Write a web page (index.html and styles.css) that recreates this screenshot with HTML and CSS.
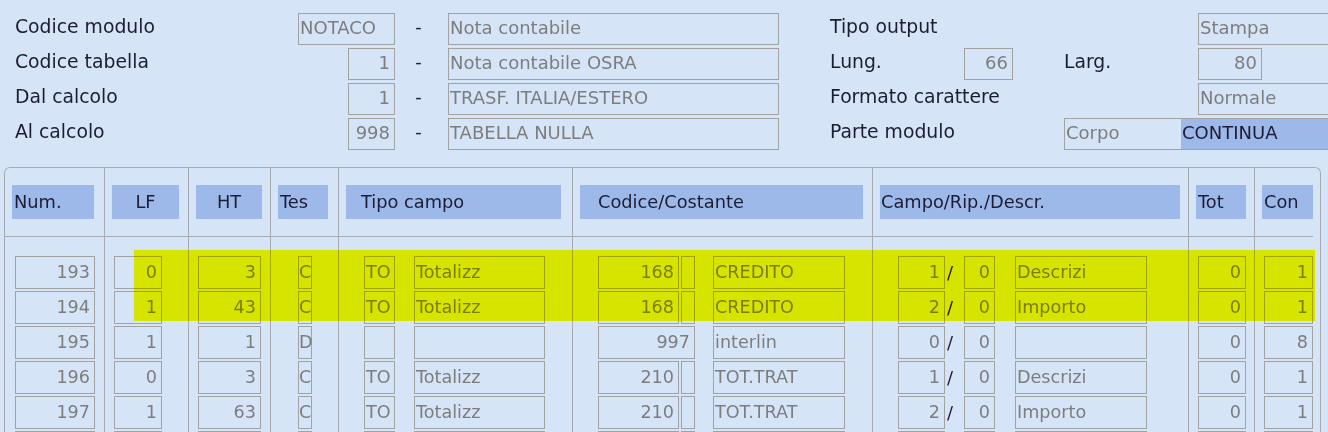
FILE: index.html
```html
<!DOCTYPE html>
<html lang="it">
<head>
<meta charset="utf-8">
<title>Nota contabile</title>
<link rel="stylesheet" href="styles.css">
</head>
<body>
<div class="page">
  <div class="top">
    <div class="lbl c1">Codice modulo</div>
    <div class="fld c2 w97">NOTACO</div>
    <div class="dash c3">-</div>
    <div class="fld c4">Nota contabile</div>
    <div class="lbl c6">Tipo output</div>
    <div class="fld c11 wide">Stampa</div>

    <div class="lbl c1">Codice tabella</div>
    <div class="fld c2 w47 num">1</div>
    <div class="dash c3">-</div>
    <div class="fld c4">Nota contabile OSRA</div>
    <div class="lbl c6">Lung.</div>
    <div class="fld c7 num">66</div>
    <div class="lbl c9">Larg.</div>
    <div class="fld c11 w64 num">80</div>

    <div class="lbl c1">Dal calcolo</div>
    <div class="fld c2 w47 num">1</div>
    <div class="dash c3">-</div>
    <div class="fld c4">TRASF. ITALIA/ESTERO</div>
    <div class="lbl c6 span3">Formato carattere</div>
    <div class="fld c11 wide">Normale</div>

    <div class="lbl c1">Al calcolo</div>
    <div class="fld c2 w47 num">998</div>
    <div class="dash c3">-</div>
    <div class="fld c4">TABELLA NULLA</div>
    <div class="lbl c6">Parte modulo</div>
    <div class="combo c9to11"><span class="combo-a">Corpo</span><span class="combo-b">CONTINUA</span></div>
  </div>

  <div class="table">
    <div class="trow head">
      <div class="cell"><div class="th w82">Num.</div></div>
      <div class="cell"><div class="th w67 center">LF</div></div>
      <div class="cell"><div class="th w66 center">HT</div></div>
      <div class="cell"><div class="th w50">Tes</div></div>
      <div class="cell"><div class="th w215 p15">Tipo campo</div></div>
      <div class="cell"><div class="th w283 p18">Codice/Costante</div></div>
      <div class="cell"><div class="th w300 p1">Campo/Rip./Descr.</div></div>
      <div class="cell"><div class="th w50">Tot</div></div>
      <div class="cell"><div class="th w51">Con</div></div>
    </div>
    <div class="trow spacer">
      <div class="cell"></div><div class="cell"></div><div class="cell"></div><div class="cell"></div><div class="cell"></div><div class="cell"></div><div class="cell"></div><div class="cell"></div><div class="cell"></div>
    </div>

    <div class="trow data">
      <div class="cell"><div class="bx b-num num">193</div></div>
      <div class="cell"><div class="bx b-lf num">0</div></div>
      <div class="cell"><div class="bx b-ht num">3</div></div>
      <div class="cell"><div class="bx b-tes">C</div></div>
      <div class="cell"><div class="bx b-to">TO</div><div class="bx b-txt g19">Totalizz</div></div>
      <div class="cell"><div class="bx b-cod num">168</div><div class="bx b-sm"></div><div class="bx b-txt g18">CREDITO</div></div>
      <div class="cell"><div class="bx b-c1 num">1</div><div class="slash">/</div><div class="bx b-c2 num">0</div><div class="bx b-txt g20">Descrizi</div></div>
      <div class="cell"><div class="bx b-tot num">0</div></div>
      <div class="cell"><div class="bx b-con num">1</div></div>
    </div>
    <div class="trow data">
      <div class="cell"><div class="bx b-num num">194</div></div>
      <div class="cell"><div class="bx b-lf num">1</div></div>
      <div class="cell"><div class="bx b-ht num">43</div></div>
      <div class="cell"><div class="bx b-tes">C</div></div>
      <div class="cell"><div class="bx b-to">TO</div><div class="bx b-txt g19">Totalizz</div></div>
      <div class="cell"><div class="bx b-cod num">168</div><div class="bx b-sm"></div><div class="bx b-txt g18">CREDITO</div></div>
      <div class="cell"><div class="bx b-c1 num">2</div><div class="slash">/</div><div class="bx b-c2 num">0</div><div class="bx b-txt g20">Importo</div></div>
      <div class="cell"><div class="bx b-tot num">0</div></div>
      <div class="cell"><div class="bx b-con num">1</div></div>
    </div>
    <div class="trow data">
      <div class="cell"><div class="bx b-num num">195</div></div>
      <div class="cell"><div class="bx b-lf num">1</div></div>
      <div class="cell"><div class="bx b-ht num">1</div></div>
      <div class="cell"><div class="bx b-tes">D</div></div>
      <div class="cell"><div class="bx b-to"></div><div class="bx b-txt g19"></div></div>
      <div class="cell"><div class="bx b-codw num">997</div><div class="bx b-txt g18">interlin</div></div>
      <div class="cell"><div class="bx b-c1 num">0</div><div class="slash">/</div><div class="bx b-c2 num">0</div><div class="bx b-txt g20"></div></div>
      <div class="cell"><div class="bx b-tot num">0</div></div>
      <div class="cell"><div class="bx b-con num">8</div></div>
    </div>
    <div class="trow data">
      <div class="cell"><div class="bx b-num num">196</div></div>
      <div class="cell"><div class="bx b-lf num">0</div></div>
      <div class="cell"><div class="bx b-ht num">3</div></div>
      <div class="cell"><div class="bx b-tes">C</div></div>
      <div class="cell"><div class="bx b-to">TO</div><div class="bx b-txt g19">Totalizz</div></div>
      <div class="cell"><div class="bx b-cod num">210</div><div class="bx b-sm"></div><div class="bx b-txt g18">TOT.TRAT</div></div>
      <div class="cell"><div class="bx b-c1 num">1</div><div class="slash">/</div><div class="bx b-c2 num">0</div><div class="bx b-txt g20">Descrizi</div></div>
      <div class="cell"><div class="bx b-tot num">0</div></div>
      <div class="cell"><div class="bx b-con num">1</div></div>
    </div>
    <div class="trow data">
      <div class="cell"><div class="bx b-num num">197</div></div>
      <div class="cell"><div class="bx b-lf num">1</div></div>
      <div class="cell"><div class="bx b-ht num">63</div></div>
      <div class="cell"><div class="bx b-tes">C</div></div>
      <div class="cell"><div class="bx b-to">TO</div><div class="bx b-txt g19">Totalizz</div></div>
      <div class="cell"><div class="bx b-cod num">210</div><div class="bx b-sm"></div><div class="bx b-txt g18">TOT.TRAT</div></div>
      <div class="cell"><div class="bx b-c1 num">2</div><div class="slash">/</div><div class="bx b-c2 num">0</div><div class="bx b-txt g20">Importo</div></div>
      <div class="cell"><div class="bx b-tot num">0</div></div>
      <div class="cell"><div class="bx b-con num">1</div></div>
    </div>
    <div class="trow data">
      <div class="cell"><div class="bx b-num num"></div></div>
      <div class="cell"><div class="bx b-lf num"></div></div>
      <div class="cell"><div class="bx b-ht num"></div></div>
      <div class="cell"><div class="bx b-tes"></div></div>
      <div class="cell"><div class="bx b-to"></div><div class="bx b-txt g19"></div></div>
      <div class="cell"><div class="bx b-cod num"></div><div class="bx b-sm"></div><div class="bx b-txt g18"></div></div>
      <div class="cell"><div class="bx b-c1 num"></div><div class="slash"></div><div class="bx b-c2 num"></div><div class="bx b-txt g20"></div></div>
      <div class="cell"><div class="bx b-tot num"></div></div>
      <div class="cell"><div class="bx b-con num"></div></div>
    </div>

    <div class="highlight"></div>
  </div>
</div>
</body>
</html>
```

FILE: styles.css
```css
html, body {
  margin: 0;
  padding: 0;
  background: #d6e4f7;
  overflow: hidden;
}
.page {
  width: 1328px;
  height: 432px;
  overflow: hidden;
  font-family: "DejaVu Sans", Verdana, sans-serif;
  color: #1c1c34;
}

/* ---------- top form ---------- */
.top {
  display: grid;
  grid-template-columns: 283px 97px 53px 331px 51px 134px 49px 51px 116px 18px 140px;
  grid-auto-rows: 32px;
  row-gap: 3px;
  padding: 13px 0 0 15px;
}
.lbl {
  font-size: 18.8px;
  line-height: 28px;
  white-space: nowrap;
}
.c1 { grid-column: 1; }
.c2 { grid-column: 2; }
.c3 { grid-column: 3; }
.c4 { grid-column: 4; }
.c6 { grid-column: 6; }
.c7 { grid-column: 7; }
.c9 { grid-column: 9; }
.c11 { grid-column: 11; }
.span3 { grid-column: 6 / span 3; }
.c9to11 { grid-column: 9 / span 3; }

.fld {
  box-sizing: border-box;
  border: 1px solid #a2a2a2;
  color: #7d7d7d;
  font-size: 18px;
  line-height: 28px;
  padding: 0 1px;
  white-space: nowrap;
  overflow: hidden;
}
.num { text-align: right; padding-right: 4px; }
.w97 { width: 97px; }
.w47 { width: 47px; justify-self: end; }
.w64 { width: 64px; }
.wide { width: 150px; }
.dash {
  text-align: center;
  font-size: 18px;
  line-height: 28px;
  padding-right: 6px;
}
.combo {
  display: flex;
  box-sizing: border-box;
  border: 1px solid #a2a2a2;
  width: 280px;
  font-size: 18px;
  line-height: 28px;
}
.combo-a {
  width: 115px;
  color: #7d7d7d;
  padding-left: 1px;
}
.combo-b {
  flex: 1;
  background: #9db9ea;
  color: #1c1c34;
  padding-left: 1px;
}

/* ---------- table ---------- */
.table {
  position: relative;
  margin: 17px 0 0 4px;
  width: 1317px;
  box-sizing: border-box;
  border: 1px solid #a7aab0;
  border-bottom: none;
  border-radius: 6px 6px 0 0;
}
.trow {
  display: grid;
  grid-template-columns: 100px 84px 82px 68px 234px 300px 316px 66px 65px;
}
.cell {
  box-sizing: border-box;
  border-right: 1px solid #a7aab0;
  display: flex;
  align-items: flex-start;
}
.cell:last-child { border-right: none; }

.head {
  height: 69px;
  background-image: linear-gradient(#a7aab0, #a7aab0);
  background-size: 1308px 1px;
  background-position: 0 100%;
  background-repeat: no-repeat;
}
.head .cell { padding: 17px 0 0 7px; }
.th {
  box-sizing: border-box;
  height: 34px;
  background: #9db9ea;
  font-size: 17.8px;
  line-height: 34px;
  padding-left: 2px;
  white-space: nowrap;
}
.th.center { text-align: center; padding-left: 0; }
.th.p15 { padding-left: 15px; }
.th.p18 { padding-left: 18px; }
.th.p1 { padding-left: 1px; }
.w82 { width: 82px; }
.w67 { width: 67px; }
.w66 { width: 66px; }
.w50 { width: 50px; }
.w51 { width: 51px; }
.w215 { width: 215px; }
.w283 { width: 283px; }
.w300 { width: 300px; }

.spacer { height: 19px; }
.data { height: 35px; }

.bx {
  box-sizing: border-box;
  height: 33px;
  border: 1px solid #a2a2a2;
  color: #7d7d7d;
  font-size: 17.6px;
  line-height: 31px;
  padding-left: 1px;
  white-space: nowrap;
  overflow: hidden;
  flex: none;
}
.bx.num { text-align: right; padding-right: 4px; padding-left: 0; }

.b-num { margin-left: 10px; width: 80px; }
.b-lf  { margin-left: 9px;  width: 48px; }
.b-ht  { margin-left: 9px;  width: 63px; }
.b-tes { margin-left: 27px; width: 14px; padding-left: 0; overflow: visible; }
.b-to  { margin-left: 25px; width: 31px; }
.b-txt { width: 132px; }
.g19 { margin-left: 19px; width: 131px; }
.g18 { margin-left: 18px; }
.g20 { margin-left: 20px; }
.b-cod { margin-left: 25px; width: 81px; }
.b-sm  { margin-left: 2px;  width: 14px; }
.b-codw { margin-left: 25px; width: 97px; }
.b-c1  { margin-left: 25px; width: 47px; }
.slash {
  width: 19px;
  flex: none;
  font-size: 18px;
  line-height: 33px;
  color: #2a1a3a;
  padding-left: 2px;
  box-sizing: border-box;
}
.b-c2  { width: 31px; }
.b-tot { margin-left: 9px; width: 48px; }
.b-con { margin-left: 9px; width: 49px; }

.highlight {
  position: absolute;
  left: 129px;
  top: 82px;
  width: 1181px;
  height: 71px;
  background: #ffff00;
  mix-blend-mode: multiply;
  pointer-events: none;
}
```
